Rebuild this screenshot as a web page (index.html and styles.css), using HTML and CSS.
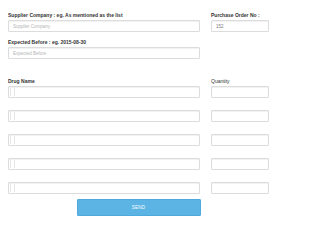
FILE: index.html
```html
<!DOCTYPE html>
<html>
<head>
<meta charset="utf-8">
<link rel="stylesheet" href="styles.css">
</head>
<body>
<form class="form">
  <div class="top">
    <div class="col-main">
      <div class="group">
        <label class="label">Supplier Company : eg. As mentioned as the list</label>
        <input class="field" type="text" placeholder="Supplier Company">
      </div>
      <div class="group group-second">
        <label class="label">Expected Before : eg. 2015-08-30</label>
        <input class="field" type="text" placeholder="Expected Before">
      </div>
    </div>
    <div class="col-side">
      <div class="group">
        <label class="label">Purchase Order No :</label>
        <input class="field" type="text" value="152">
      </div>
    </div>
  </div>

  <div class="items">
    <div class="item-head">
      <span class="label col-main">Drug Name</span>
      <span class="label label-light col-side">Quantity</span>
    </div>
    <div class="item-row">
      <div class="drug col-main"><input class="field" type="text"></div>
      <div class="col-side"><input class="field" type="text"></div>
    </div>
    <div class="item-row">
      <div class="drug col-main"><input class="field" type="text"></div>
      <div class="col-side"><input class="field" type="text"></div>
    </div>
    <div class="item-row">
      <div class="drug col-main"><input class="field" type="text"></div>
      <div class="col-side"><input class="field" type="text"></div>
    </div>
    <div class="item-row">
      <div class="drug col-main"><input class="field" type="text"></div>
      <div class="col-side"><input class="field" type="text"></div>
    </div>
    <div class="item-row">
      <div class="drug col-main"><input class="field" type="text"></div>
      <div class="col-side"><input class="field" type="text"></div>
    </div>
  </div>

  <div class="actions">
    <button class="send" type="button">SEND</button>
  </div>
</form>
</body>
</html>
```

FILE: styles.css
```css
html, body {
  margin: 0;
  padding: 0;
  background: #ffffff;
}

body {
  font-family: "Liberation Sans", Arial, sans-serif;
  color: #333333;
}

.form {
  width: 261px;
  padding: 12px 0 0 8px;
}

.top {
  display: flex;
  gap: 11px;
}

.col-main {
  width: 192px;
  flex: 0 0 192px;
}

.col-side {
  width: 58px;
  flex: 0 0 58px;
}

.group {
  display: flex;
  flex-direction: column;
}

.group-second {
  margin-top: 7px;
}

.label {
  display: block;
  font-size: 5px;
  line-height: 6px;
  font-weight: bold;
  color: #333333;
  margin-bottom: 2px;
  white-space: nowrap;
}

.label-light {
  font-weight: normal;
}

.field {
  display: block;
  box-sizing: border-box;
  width: 100%;
  height: 12px;
  margin: 0;
  padding: 0 0 0 4px;
  border: 1px solid #dcdcdc;
  border-radius: 1px;
  box-shadow: inset 0 1px 1px rgba(0, 0, 0, 0.06);
  font-family: "Liberation Sans", Arial, sans-serif;
  font-size: 4.5px;
  color: #777777;
  background: #ffffff;
  outline: none;
}

.field::placeholder {
  color: #b5b5b5;
}

.items {
  margin-top: 19px;
}

.item-head {
  display: flex;
  gap: 11px;
}

.item-row {
  display: flex;
  gap: 11px;
  margin-bottom: 12px;
}

.item-row:last-child {
  margin-bottom: 0;
}

.drug {
  position: relative;
}

.drug::before {
  content: "";
  position: absolute;
  left: 2px;
  top: 2px;
  width: 3px;
  height: 8px;
  border-left: 1px solid #e6e6e6;
  border-right: 1px solid #e6e6e6;
}

.actions {
  display: flex;
  justify-content: center;
  margin-top: 5px;
}

.send {
  width: 124px;
  height: 17px;
  margin: 0;
  padding: 0;
  border: 1px solid #4eaadd;
  border-radius: 1px;
  background: #5bb4e3;
  color: #ffffff;
  font-family: "Liberation Sans", Arial, sans-serif;
  font-size: 4.5px;
  letter-spacing: 0.2px;
}
```
